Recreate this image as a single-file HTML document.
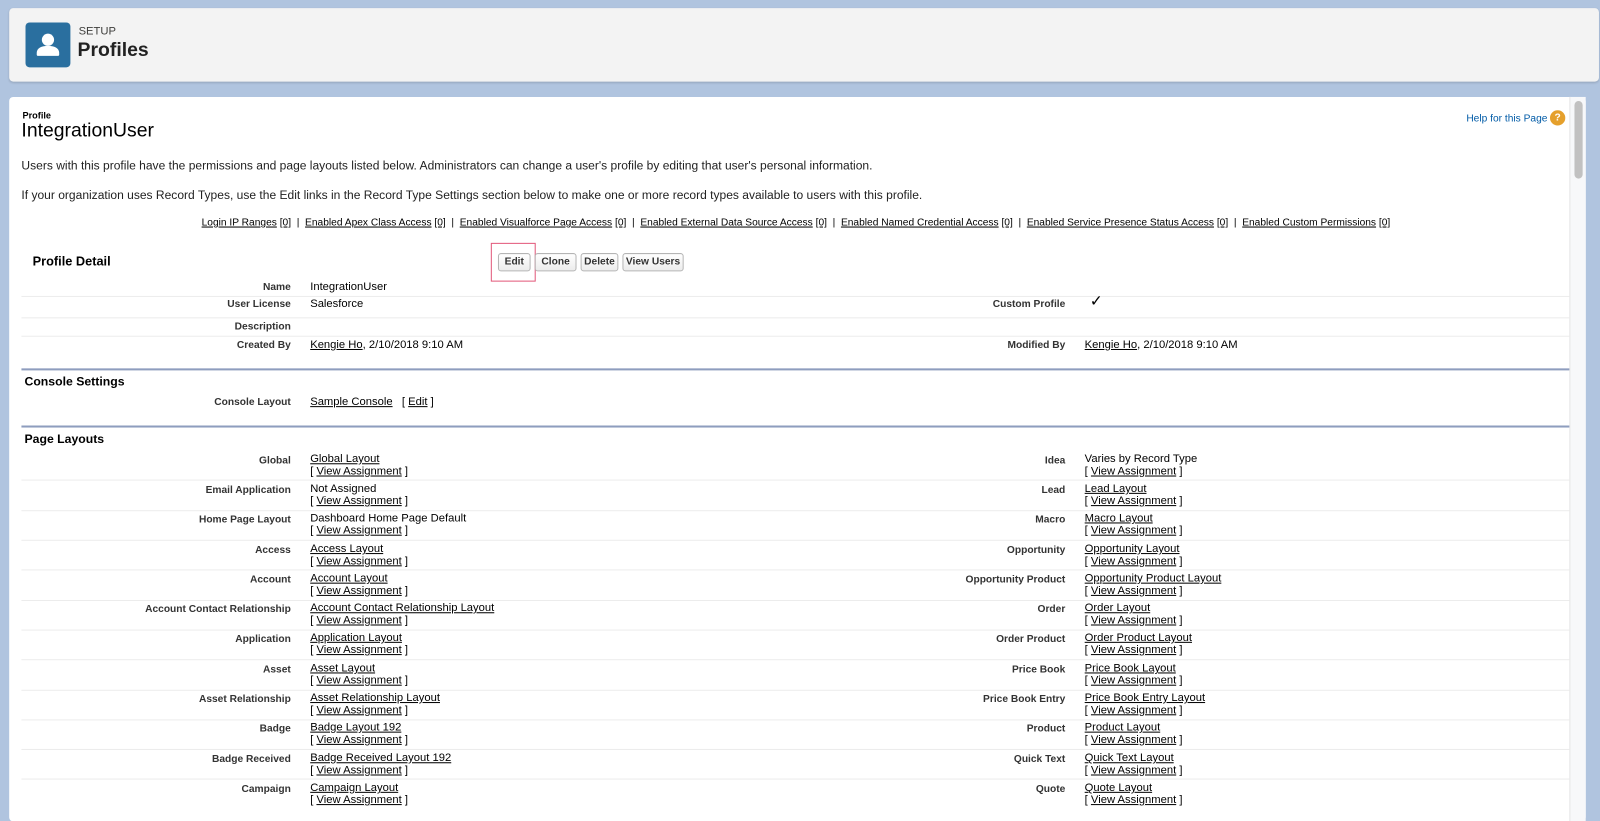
<!DOCTYPE html>
<html><head><meta charset="utf-8"><style>
*{margin:0;padding:0;box-sizing:border-box}
body{width:1600px;height:797px;overflow:hidden;background:#b0c4df;font-family:"Liberation Sans",Arial,sans-serif;color:#000;position:relative}
#w{position:absolute;left:0;top:0;width:1568px;height:781px;transform:scale(1.0204);transform-origin:0 0}
.a{position:absolute}
.hdr{left:9px;top:8px;width:1558px;height:72px;background:#f3f3f3;border-radius:4px;box-shadow:0 1px 2px rgba(0,0,0,.15)}
.main{left:9px;top:95px;width:1545px;height:710px;background:#fff;border-radius:4px}
.sb{left:1538px;top:95px;width:16px;height:710px;background:#f7f8fa;border-left:1px solid #e6e6e6}
.thumb{left:1543px;top:99px;width:8px;height:76px;background:#c1c1c1;border-radius:4px}
u{text-decoration:underline}
.lbl{position:absolute;right:1283px;font-size:10px;font-weight:bold;color:#333;text-align:right;white-space:nowrap}
.lbl2{position:absolute;right:524px;font-size:10px;font-weight:bold;color:#333;text-align:right;white-space:nowrap}
.val{position:absolute;left:304px;font-size:11px;line-height:11.5px;white-space:nowrap}
.val2{position:absolute;left:1063px;font-size:11px;line-height:11.5px;white-space:nowrap}
.line{position:absolute;left:21px;width:1517px;height:1px;background:#ececec}
.sec{position:absolute;left:21px;width:1517px;height:2px;background:#8e9dbe}
.btn{position:absolute;top:248px;height:18px;border:1px solid #b5b5b5;border-radius:3px;background:linear-gradient(#fff,#ececec);font-size:10px;font-weight:bold;text-align:center;line-height:16px;color:#333}
.links{left:0;width:1560px;top:213px;text-align:center;font-size:10px;color:#000}
</style></head><body><div id="w">
<div class="a hdr"></div>
<div class="a" style="left:25px;top:22px;width:44px;height:44px;background:#2a6f9f;border-radius:4px">
<svg width="44" height="44" viewBox="0 0 44 44"><circle cx="22" cy="17" r="6" fill="#fff"/><path d="M11 30c0-5 5-7 11-7s11 2 11 7v1.5c0 .8-.6 1.3-1.3 1.3H12.3c-.7 0-1.3-.5-1.3-1.3z" fill="#fff"/></svg></div>
<div class="a" style="left:77px;top:25px;font-size:11px;color:#3e3e3c">SETUP</div>
<div class="a" style="left:76px;top:39px;font-size:19px;font-weight:bold;color:#222">Profiles</div>
<div class="a main"></div>
<div class="a sb"></div><div class="a thumb"></div>
<div class="a" style="left:22px;top:108px;font-size:9px;font-weight:bold">Profile</div>
<div class="a" style="left:21px;top:118px;font-size:19px">IntegrationUser</div>
<div class="a" style="left:1437px;top:111px;font-size:10px;color:#015ba7">Help for this Page</div>
<div class="a" style="left:1519px;top:108px;width:15px;height:15px;border-radius:50%;background:#e5a02c;color:#fff;font-size:10px;font-weight:bold;text-align:center;line-height:15px">?</div>
<div class="a" style="left:21px;top:155px;font-size:11.8px;color:#222">Users with this profile have the permissions and page layouts listed below. Administrators can change a user's profile by editing that user's personal information.</div>
<div class="a" style="left:21px;top:184px;font-size:11.8px;color:#222">If your organization uses Record Types, use the Edit links in the Record Type Settings section below to make one or more record types available to users with this profile.</div>
<div class="a links"><u>Login IP Ranges</u> <u>[0]</u> &nbsp;|&nbsp; <u>Enabled Apex Class Access</u> <u>[0]</u> &nbsp;|&nbsp; <u>Enabled Visualforce Page Access</u> <u>[0]</u> &nbsp;|&nbsp; <u>Enabled External Data Source Access</u> <u>[0]</u> &nbsp;|&nbsp; <u>Enabled Named Credential Access</u> <u>[0]</u> &nbsp;|&nbsp; <u>Enabled Service Presence Status Access</u> <u>[0]</u> &nbsp;|&nbsp; <u>Enabled Custom Permissions</u> <u>[0]</u></div>
<div class="a" style="left:32px;top:249px;font-size:12.5px;font-weight:bold">Profile Detail</div>
<div class="a" style="left:481px;top:238px;width:44px;height:38px;border:1px solid #e2587a"></div>
<div class="btn" style="left:488px;width:32px">Edit</div>
<div class="btn" style="left:524px;width:41px">Clone</div>
<div class="btn" style="left:569px;width:37px">Delete</div>
<div class="btn" style="left:610px;width:60px">View Users</div>
<div class="lbl" style="top:276px">Name</div><div class="val" style="top:276px">IntegrationUser</div>
<div class="line" style="top:290px"></div>
<div class="lbl" style="top:293px">User License</div><div class="val" style="top:293px">Salesforce</div>
<div class="lbl2" style="top:293px">Custom Profile</div><div class="val2" style="top:290px;left:1068px;font-size:15px">✓</div>
<div class="line" style="top:311px"></div>
<div class="lbl" style="top:315px">Description</div>
<div class="line" style="top:329px"></div>
<div class="lbl" style="top:333px">Created By</div><div class="val" style="top:333px"><u>Kengie Ho</u>, 2/10/2018 9:10 AM</div>
<div class="lbl2" style="top:333px">Modified By</div><div class="val2" style="top:333px"><u>Kengie Ho</u>, 2/10/2018 9:10 AM</div>
<div class="sec" style="top:361px"></div>
<div class="a" style="left:24px;top:367px;font-size:12px;font-weight:bold">Console Settings</div>
<div class="lbl" style="top:389px">Console Layout</div><div class="val" style="top:389px"><u>Sample Console</u> &nbsp; [ <u>Edit</u> ]</div>
<div class="sec" style="top:417px"></div>
<div class="a" style="left:24px;top:423px;font-size:12px;font-weight:bold">Page Layouts</div>
<div class="lbl" style="top:446px">Global</div><div class="val" style="top:445px"><u>Global Layout</u><br>[ <u>View Assignment</u> ]</div><div class="lbl2" style="top:446px">Idea</div><div class="val2" style="top:445px">Varies by Record Type<br>[ <u>View Assignment</u> ]</div><div class="line" style="top:470px"></div>
<div class="lbl" style="top:475px">Email Application</div><div class="val" style="top:474px">Not Assigned<br>[ <u>View Assignment</u> ]</div><div class="lbl2" style="top:475px">Lead</div><div class="val2" style="top:474px"><u>Lead Layout</u><br>[ <u>View Assignment</u> ]</div><div class="line" style="top:500px"></div>
<div class="lbl" style="top:504px">Home Page Layout</div><div class="val" style="top:503px">Dashboard Home Page Default<br>[ <u>View Assignment</u> ]</div><div class="lbl2" style="top:504px">Macro</div><div class="val2" style="top:503px"><u>Macro Layout</u><br>[ <u>View Assignment</u> ]</div><div class="line" style="top:529px"></div>
<div class="lbl" style="top:534px">Access</div><div class="val" style="top:533px"><u>Access Layout</u><br>[ <u>View Assignment</u> ]</div><div class="lbl2" style="top:534px">Opportunity</div><div class="val2" style="top:533px"><u>Opportunity Layout</u><br>[ <u>View Assignment</u> ]</div><div class="line" style="top:558px"></div>
<div class="lbl" style="top:563px">Account</div><div class="val" style="top:562px"><u>Account Layout</u><br>[ <u>View Assignment</u> ]</div><div class="lbl2" style="top:563px">Opportunity Product</div><div class="val2" style="top:562px"><u>Opportunity Product Layout</u><br>[ <u>View Assignment</u> ]</div><div class="line" style="top:588px"></div>
<div class="lbl" style="top:592px">Account Contact Relationship</div><div class="val" style="top:591px"><u>Account Contact Relationship Layout</u><br>[ <u>View Assignment</u> ]</div><div class="lbl2" style="top:592px">Order</div><div class="val2" style="top:591px"><u>Order Layout</u><br>[ <u>View Assignment</u> ]</div><div class="line" style="top:617px"></div>
<div class="lbl" style="top:621px">Application</div><div class="val" style="top:620px"><u>Application Layout</u><br>[ <u>View Assignment</u> ]</div><div class="lbl2" style="top:621px">Order Product</div><div class="val2" style="top:620px"><u>Order Product Layout</u><br>[ <u>View Assignment</u> ]</div><div class="line" style="top:646px"></div>
<div class="lbl" style="top:651px">Asset</div><div class="val" style="top:650px"><u>Asset Layout</u><br>[ <u>View Assignment</u> ]</div><div class="lbl2" style="top:651px">Price Book</div><div class="val2" style="top:650px"><u>Price Book Layout</u><br>[ <u>View Assignment</u> ]</div><div class="line" style="top:676px"></div>
<div class="lbl" style="top:680px">Asset Relationship</div><div class="val" style="top:679px"><u>Asset Relationship Layout</u><br>[ <u>View Assignment</u> ]</div><div class="lbl2" style="top:680px">Price Book Entry</div><div class="val2" style="top:679px"><u>Price Book Entry Layout</u><br>[ <u>View Assignment</u> ]</div><div class="line" style="top:705px"></div>
<div class="lbl" style="top:709px">Badge</div><div class="val" style="top:708px"><u>Badge Layout 192</u><br>[ <u>View Assignment</u> ]</div><div class="lbl2" style="top:709px">Product</div><div class="val2" style="top:708px"><u>Product Layout</u><br>[ <u>View Assignment</u> ]</div><div class="line" style="top:734px"></div>
<div class="lbl" style="top:739px">Badge Received</div><div class="val" style="top:738px"><u>Badge Received Layout 192</u><br>[ <u>View Assignment</u> ]</div><div class="lbl2" style="top:739px">Quick Text</div><div class="val2" style="top:738px"><u>Quick Text Layout</u><br>[ <u>View Assignment</u> ]</div><div class="line" style="top:763px"></div>
<div class="lbl" style="top:768px">Campaign</div><div class="val" style="top:767px"><u>Campaign Layout</u><br>[ <u>View Assignment</u> ]</div><div class="lbl2" style="top:768px">Quote</div><div class="val2" style="top:767px"><u>Quote Layout</u><br>[ <u>View Assignment</u> ]</div>
</div></body></html>
